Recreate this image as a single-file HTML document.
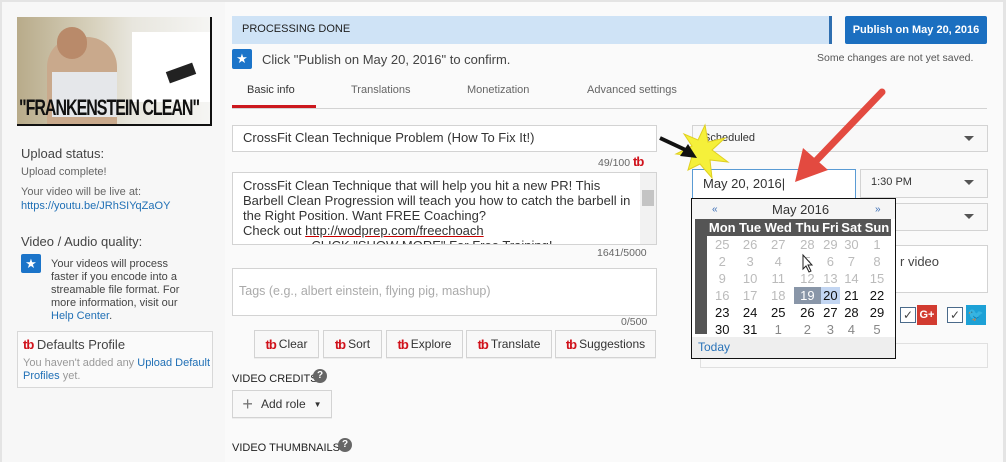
<!DOCTYPE html>
<html><head><meta charset="utf-8"><style>
*{box-sizing:border-box;margin:0;padding:0}
body{width:1006px;height:462px;overflow:hidden;background:#fafafa;font-family:"Liberation Sans",Arial,sans-serif;color:#333;position:relative}
.a{position:absolute}
.t{position:absolute;white-space:nowrap}
.inp{position:absolute;background:#fff;border:1px solid #d3d3d3}
.btn{position:absolute;background:#f8f8f8;border:1px solid #d3d3d3;font-size:12px;color:#333;display:flex;align-items:center;justify-content:center;gap:3px;box-shadow:0 1px 0 rgba(0,0,0,.05)}
.tb{color:#d0121b;font-weight:bold;font-size:13px;letter-spacing:-1px}
.star{position:absolute;background:#1b74c9;border-radius:2px;color:#fff;font-size:13px;text-align:center;line-height:19px}
.car{position:absolute;width:0;height:0;border-left:5px solid transparent;border-right:5px solid transparent;border-top:5px solid #555}
.q{position:absolute;width:14px;height:14px;border-radius:7px;background:#666;color:#fff;font-size:10px;font-weight:bold;text-align:center;line-height:14px}
table{border-collapse:collapse}
td{font-size:13px;text-align:center;height:17px;padding:0;line-height:17px}
</style></head><body>
<div class="a" style="left:0;top:0;width:225px;height:462px;background:#f7f7f7"></div>
<div class="a" style="left:0;top:0;width:1006px;height:2px;background:#e4e4e4"></div>
<div class="a" style="left:1003px;top:0;width:3px;height:462px;background:#e4e4e4"></div>
<div class="a" style="left:0;top:0;width:2px;height:462px;background:#e4e4e4"></div>

<!-- thumbnail -->
<div class="a" style="left:17px;top:17px;width:195px;height:109px;background:linear-gradient(90deg,#b8ab8a 0%,#d8d2be 40%,#e8e6de 60%,#f5f5f3 100%);border-bottom:2px solid #111;border-right:2px solid #111;overflow:hidden">
 <div class="a" style="left:30px;top:20px;width:70px;height:90px;background:#c9a98c;border-radius:30px 30px 0 0"></div>
 <div class="a" style="left:40px;top:10px;width:30px;height:32px;background:#b98a6a;border-radius:15px"></div>
 <div class="a" style="left:35px;top:55px;width:65px;height:45px;background:#e5e7ea"></div>
 <div class="a" style="left:115px;top:15px;width:80px;height:70px;background:#fff"></div>
 <div class="a" style="left:150px;top:50px;width:28px;height:12px;background:#222;transform:rotate(-20deg)"></div>
 <div class="t" style="left:2px;top:80px;font-size:16px;font-weight:bold;color:#111;letter-spacing:-1px;transform:scaleY(1.4);transform-origin:left top">"FRANKENSTEIN CLEAN"</div>
</div>

<div class="t" style="left:21px;top:146px;font-size:13px;color:#444">Upload status:</div>
<div class="t" style="left:21px;top:166px;font-size:11px;color:#666">Upload complete!</div>
<div class="t" style="left:21px;top:186px;font-size:11px;color:#666">Your video will be live at:</div>
<div class="t" style="left:21px;top:200px;font-size:11px;color:#1f6fb5">https://youtu.be/JRhSIYqZaOY</div>
<div class="t" style="left:21px;top:234px;font-size:13px;color:#444">Video / Audio quality:</div>
<div class="star" style="left:21px;top:254px;width:20px;height:19px">★</div>
<div class="a" style="left:51px;top:258px;font-size:11px;line-height:13px;color:#444;width:140px">Your videos will process faster if you encode into a streamable file format. For more information, visit our <span style="color:#1f6fb5">Help Center</span>.</div>
<div class="a" style="left:17px;top:331px;width:196px;height:57px;border:1px solid #d8d8d8;background:#fafafa"></div>
<div class="t" style="left:23px;top:337px;font-size:13px;color:#444"><span class="tb">tb</span> Defaults Profile</div>
<div class="a" style="left:23px;top:357px;font-size:11px;line-height:13px;color:#999;width:190px">You haven't added any <span style="color:#1f6fb5">Upload Default Profiles</span> yet.</div>

<!-- main -->
<div class="a" style="left:232px;top:16px;width:600px;height:28px;background:#cfe3f6;border-right:3px solid #2f6fb0"></div>
<div class="t" style="left:242px;top:23px;font-size:11px;color:#222">PROCESSING DONE</div>
<div class="a" style="left:845px;top:16px;width:142px;height:28px;background:#1b6fc0;border-radius:2px;color:#fff;font-size:11px;font-weight:bold;text-align:center;line-height:28px">Publish on May 20, 2016</div>
<div class="star" style="left:232px;top:49px;width:20px;height:20px;line-height:20px">★</div>
<div class="t" style="left:262px;top:52px;font-size:13px;color:#444">Click "Publish on May 20, 2016" to confirm.</div>
<div class="t" style="left:817px;top:52px;font-size:10.5px;color:#555">Some changes are not yet saved.</div>
<div class="t" style="left:247px;top:84px;font-size:11px;color:#333">Basic info</div>
<div class="t" style="left:351px;top:84px;font-size:11px;color:#666">Translations</div>
<div class="t" style="left:467px;top:84px;font-size:11px;color:#666">Monetization</div>
<div class="t" style="left:587px;top:84px;font-size:11px;color:#666">Advanced settings</div>
<div class="a" style="left:232px;top:108px;width:755px;height:1px;background:#d3d3d3"></div>
<div class="a" style="left:232px;top:105px;width:84px;height:3px;background:#cc181e"></div>

<div class="inp" style="left:232px;top:125px;width:425px;height:27px"></div>
<div class="t" style="left:243px;top:130px;font-size:13px;color:#333">CrossFit Clean Technique Problem (How To Fix It!)</div>
<div class="t" style="left:598px;top:154px;font-size:10.5px;color:#666">49/100 <span class="tb">tb</span></div>
<div class="inp" style="left:232px;top:172px;width:425px;height:73px;overflow:hidden">
 <div class="a" style="left:10px;top:5px;font-size:13px;line-height:15px;color:#333;width:390px">CrossFit Clean Technique that will help you hit a new PR! This Barbell Clean Progression will teach you how to catch the barbell in the Right Position. Want FREE Coaching?<br>Check out <u style="text-decoration-color:#c00">http://wodprep.com/freechoach</u><br>=========CLICK "SHOW MORE" For Free Training! =======</div>
 <div class="a" style="left:407px;top:0;width:16px;height:71px;background:#f2f2f2"></div>
 <div class="a" style="left:409px;top:17px;width:12px;height:16px;background:#c4c4c4"></div>
</div>
<div class="t" style="left:597px;top:247px;font-size:10.5px;color:#666">1641/5000</div>
<div class="inp" style="left:232px;top:268px;width:425px;height:48px"></div>
<div class="t" style="left:239px;top:284px;font-size:12.5px;color:#aaa">Tags (e.g., albert einstein, flying pig, mashup)</div>
<div class="t" style="left:621px;top:316px;font-size:10.5px;color:#666">0/500</div>
<div class="btn" style="left:254px;top:330px;width:65px;height:28px"><span class="tb">tb</span>Clear</div>
<div class="btn" style="left:323px;top:330px;width:59px;height:28px"><span class="tb">tb</span>Sort</div>
<div class="btn" style="left:386px;top:330px;width:77px;height:28px"><span class="tb">tb</span>Explore</div>
<div class="btn" style="left:466px;top:330px;width:86px;height:28px"><span class="tb">tb</span>Translate</div>
<div class="btn" style="left:555px;top:330px;width:101px;height:28px"><span class="tb">tb</span>Suggestions</div>
<div class="t" style="left:232px;top:373px;font-size:11px;color:#222">VIDEO CREDITS</div>
<div class="q" style="left:313px;top:369px">?</div>
<div class="btn" style="left:232px;top:390px;width:100px;height:28px;gap:8px"><span style="font-size:18px;color:#777;font-weight:300">+</span>Add role <span style="font-size:8px">▼</span></div>
<div class="t" style="left:232px;top:442px;font-size:11px;color:#222">VIDEO THUMBNAILS</div>
<div class="q" style="left:338px;top:438px">?</div>

<!-- right column -->
<div class="inp" style="left:692px;top:125px;width:296px;height:27px;background:#f8f8f8"></div>
<div class="t" style="left:703px;top:132px;font-size:11px;color:#333">Scheduled</div>
<div class="car" style="left:964px;top:136px"></div>
<div class="inp" style="left:692px;top:169px;width:164px;height:30px;border-color:#5a9bd4"></div>
<div class="t" style="left:703px;top:176px;font-size:13px;color:#333">May 20, 2016|</div>
<div class="inp" style="left:860px;top:169px;width:128px;height:29px;background:#f8f8f8"></div>
<div class="t" style="left:871px;top:176px;font-size:11px;color:#333">1:30 PM</div>
<div class="car" style="left:964px;top:180px"></div>
<div class="inp" style="left:860px;top:203px;width:128px;height:28px;background:#f8f8f8"></div>
<div class="car" style="left:964px;top:214px"></div>
<div class="inp" style="left:860px;top:245px;width:128px;height:48px"></div>
<div class="t" style="left:900px;top:254px;font-size:13px;color:#444">r video</div>
<div class="a" style="left:900px;top:307px;width:16px;height:16px;border:1px solid #4a6a8a;background:#fff;color:#444;font-size:12px;line-height:14px;text-align:center">✓</div>
<div class="a" style="left:917px;top:305px;width:20px;height:20px;background:#d23b30;color:#fff;font-size:11px;font-weight:bold;line-height:20px;text-align:center">G+</div>
<div class="a" style="left:947px;top:307px;width:16px;height:16px;border:1px solid #4a6a8a;background:#fff;color:#444;font-size:12px;line-height:14px;text-align:center">✓</div>
<div class="a" style="left:966px;top:305px;width:20px;height:20px;background:#1da1d6;color:#fff;font-size:13px;line-height:20px;text-align:center">🐦</div>
<div class="a" style="left:700px;top:343px;width:288px;height:25px;border:1px solid #e0e0e0;background:#fafafa"></div>

<!-- calendar -->
<div class="a" style="left:691px;top:198px;width:205px;height:161px;border:1px solid #111;background:#fff">
 <div class="a" style="left:0;top:0;width:203px;height:20px;background:#f5f5f5"></div>
 <div class="t" style="left:20px;top:5px;font-size:10px;color:#3a6db5">«</div>
 <div class="t" style="left:80px;top:3px;font-size:13px;color:#333">May 2016</div>
 <div class="t" style="left:183px;top:5px;font-size:10px;color:#3a6db5">»</div>
 <div class="a" style="left:3px;top:20px;width:12px;height:115px;background:#555"></div>
 <table class="a" style="left:15px;top:20px;width:184px">
  <tr style="background:#555;color:#fff"><td style="color:#fff;font-weight:bold;height:15px;line-height:15px">Mon</td><td style="color:#fff;font-weight:bold">Tue</td><td style="color:#fff;font-weight:bold">Wed</td><td style="color:#fff;font-weight:bold">Thu</td><td style="color:#fff;font-weight:bold">Fri</td><td style="color:#fff;font-weight:bold">Sat</td><td style="color:#fff;font-weight:bold">Sun</td></tr>
  <tr style="color:#bbb"><td>25</td><td>26</td><td>27</td><td>28</td><td>29</td><td>30</td><td>1</td></tr>
  <tr style="color:#bbb"><td>2</td><td>3</td><td>4</td><td>5</td><td>6</td><td>7</td><td>8</td></tr>
  <tr style="color:#bbb"><td>9</td><td>10</td><td>11</td><td>12</td><td>13</td><td>14</td><td>15</td></tr>
  <tr><td style="color:#bbb">16</td><td style="color:#bbb">17</td><td style="color:#bbb">18</td><td style="background:#8996a8;color:#fff">19</td><td style="background:#c3d6f2;color:#111">20</td><td style="color:#111">21</td><td style="color:#111">22</td></tr>
  <tr style="color:#111"><td>23</td><td>24</td><td>25</td><td>26</td><td>27</td><td>28</td><td>29</td></tr>
  <tr><td style="color:#111">30</td><td style="color:#111">31</td><td style="color:#888">1</td><td style="color:#888">2</td><td style="color:#888">3</td><td style="color:#888">4</td><td style="color:#888">5</td></tr>
 </table>
 <div class="a" style="left:0;top:138px;width:203px;height:21px;background:#eee"></div>
 <div class="t" style="left:6px;top:141px;font-size:12px;color:#2a73b8">Today</div>
</div>

<!-- annotations -->
<svg class="a" style="left:0;top:0" width="1006" height="462">
 <polygon points="705,125 708,142 725,138 712,150 728,162 710,160 712,178 700,164 688,170 692,156 676,154 692,146 684,134 698,140" fill="#f5f03a" stroke="#e0d020" stroke-width="1"/>
 <line x1="660" y1="138" x2="690" y2="152" stroke="#111" stroke-width="4"/>
 <polygon points="697,158 680,156 688,144" fill="#111"/>
 <line x1="882" y1="92" x2="812" y2="165" stroke="#e34a40" stroke-width="7" stroke-linecap="round"/>
 <polygon points="795,182 803,148 828,170" fill="#e34a40"/>
 <path d="M803 255 l0 14 l3 -3 l3 6 l2 -1 l-3 -6 l4 0 z" fill="#fff" stroke="#222" stroke-width="1"/>
</svg>
</body></html>
